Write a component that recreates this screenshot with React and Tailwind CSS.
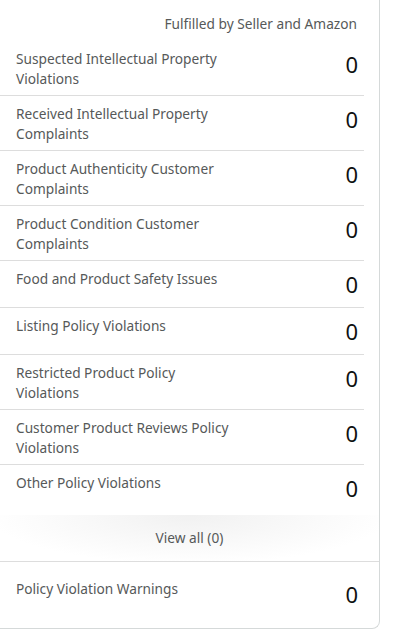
import React from 'react';

const rows = [
  'Suspected Intellectual Property Violations',
  'Received Intellectual Property Complaints',
  'Product Authenticity Customer Complaints',
  'Product Condition Customer Complaints',
  'Food and Product Safety Issues',
  'Listing Policy Violations',
  'Restricted Product Policy Violations',
  'Customer Product Reviews Policy Violations',
  'Other Policy Violations',
];

const Row = ({ label, last }) => (
  <div className={`flex justify-between pb-[6px] pl-2 pr-[6px] ${last ? '' : 'border-b border-[#dddddd]'}`}>
    <span className="pt-2 pl-2 w-[225px] text-[13.7px] leading-5 text-[#565959]">{label}</span>
    <span className="pt-[7px] pb-[1px] text-[22px] leading-8 text-[#0f1111]">0</span>
  </div>
);

export default function App() {
  return (
    <div className="w-[393px] h-[632px] bg-white font-['Noto_Sans',sans-serif]">
      <div className="w-[380px] border-r border-b border-[#d5d9d9] rounded-br-lg">
        <div className="pr-[22px] pt-[14px] pb-[7px] text-right text-[13.7px] leading-5 text-[#565959]">
          Fulfilled by Seller and Amazon
        </div>
        <div className="pr-[15px]">
          {rows.map((r, i) => (
            <Row key={r} label={r} last={i === rows.length - 1} />
          ))}
        </div>
        <div className="mt-[4px] h-[47px] flex items-center justify-center text-[13.7px] text-[#565959] bg-[radial-gradient(ellipse_at_top,#f1f1f1,#ffffff_75%)] border-b border-[#dddddd]">
          View all (0)
        </div>
        <div className="flex justify-between pb-[17px] pl-4 pr-[21px]">
          <span className="pt-[17px] text-[13.7px] leading-5 text-[#565959]">Policy Violation Warnings</span>
          <span className="pt-[16px] pb-[1px] text-[22px] leading-8 text-[#0f1111]">0</span>
        </div>
      </div>
    </div>
  );
}
